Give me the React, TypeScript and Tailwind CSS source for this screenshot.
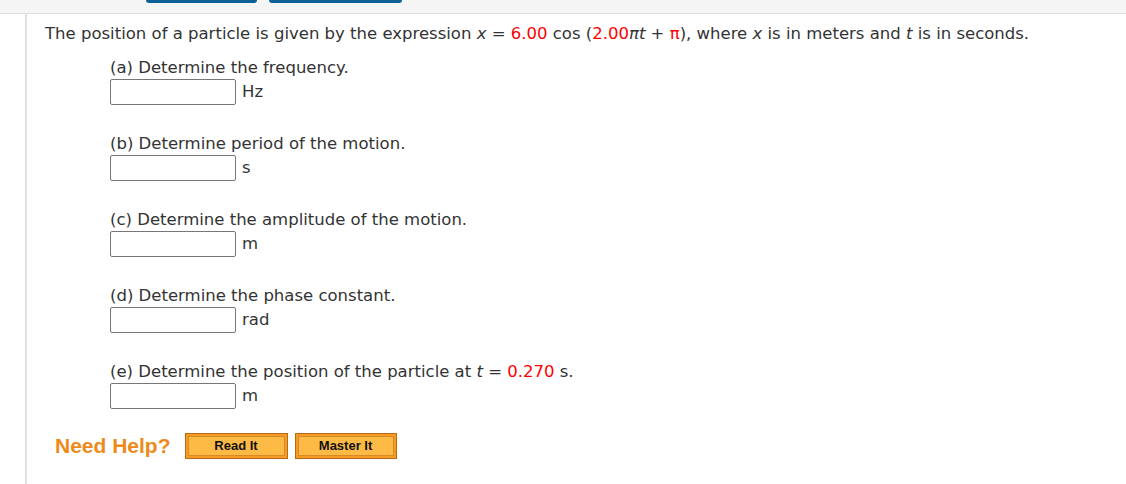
import React from "react";

const font = { fontFamily: '"DejaVu Sans", Verdana, sans-serif' };

function Part({ label, unit }: { label: React.ReactNode; unit: string }) {
  return (
    <div className="flex flex-col h-[76px]">
      <div className="h-[26px] leading-[26px] text-[16.5px] text-[#333] whitespace-nowrap">{label}</div>
      <div className="flex items-center mt-[-2px]">
        <div className="w-[126px] h-[26px] border border-[#777] rounded-[2px] bg-white" />
        <span className="ml-[6px] text-[16.5px] text-[#333]">{unit}</span>
      </div>
    </div>
  );
}

export default function App() {
  return (
    <div className="w-[1126px] h-[484px] bg-white overflow-hidden" style={font}>
      <div className="h-[14px] bg-[#f5f5f5] border-b border-[#e0e0e0] flex">
        <div className="ml-[146px] w-[111px] h-[3px] bg-[#0e6196] rounded-b-[3px]" />
        <div className="ml-[12px] w-[133px] h-[3px] bg-[#0e6196] rounded-b-[3px]" />
      </div>
      <div className="flex h-[470px]">
        <div className="ml-[25px] w-[2px] bg-[#e0e0e0]" />
        <div className="pl-[18px] pt-[9px]">
          <div className="h-[22px] leading-[22px] text-[16.5px] text-[#333] whitespace-nowrap">
            The position of a particle is given by the expression <i>x</i> ={" "}
            <span className="text-[#ff0000]">6.00</span> cos (
            <span className="text-[#ff0000]">2.00</span>
            <i>πt</i> + <span className="text-[#ff0000]">π</span>), where <i>x</i> is in meters and <i>t</i> is in seconds.
          </div>
          <div className="ml-[65px] mt-[10px]">
            <Part label="(a) Determine the frequency." unit="Hz" />
            <Part label="(b) Determine period of the motion." unit="s" />
            <Part label="(c) Determine the amplitude of the motion." unit="m" />
            <Part label="(d) Determine the phase constant." unit="rad" />
            <Part
              label={
                <>
                  (e) Determine the position of the particle at <i>t</i> ={" "}
                  <span className="text-[#ff0000]">0.270</span> s.
                </>
              }
              unit="m"
            />
          </div>
          <div className="flex items-center mt-[-5px] ml-[10px]">
            <span
              className="text-[21px] font-bold text-[#ee8a1a]"
              style={{ fontFamily: '"Liberation Sans", Arial, sans-serif' }}
            >
              Need Help?
            </span>
            <div className="ml-[14px] flex gap-[7px]">
              {["Read It", "Master It"].map((t, i) => (
                <div
                  key={t}
                  className={`${i === 0 ? "w-[103px]" : "w-[102px]"} h-[26px] bg-[#f59a25] border border-[#b86b14] p-[2px]`}
                >
                  <div
                    className="w-full h-full bg-[#fdbb45] border border-[#d98a26] flex items-center justify-center text-[13px] font-bold text-[#111]"
                    style={{ fontFamily: '"Liberation Sans", Arial, sans-serif' }}
                  >
                    {t}
                  </div>
                </div>
              ))}
            </div>
          </div>
        </div>
      </div>
    </div>
  );
}
